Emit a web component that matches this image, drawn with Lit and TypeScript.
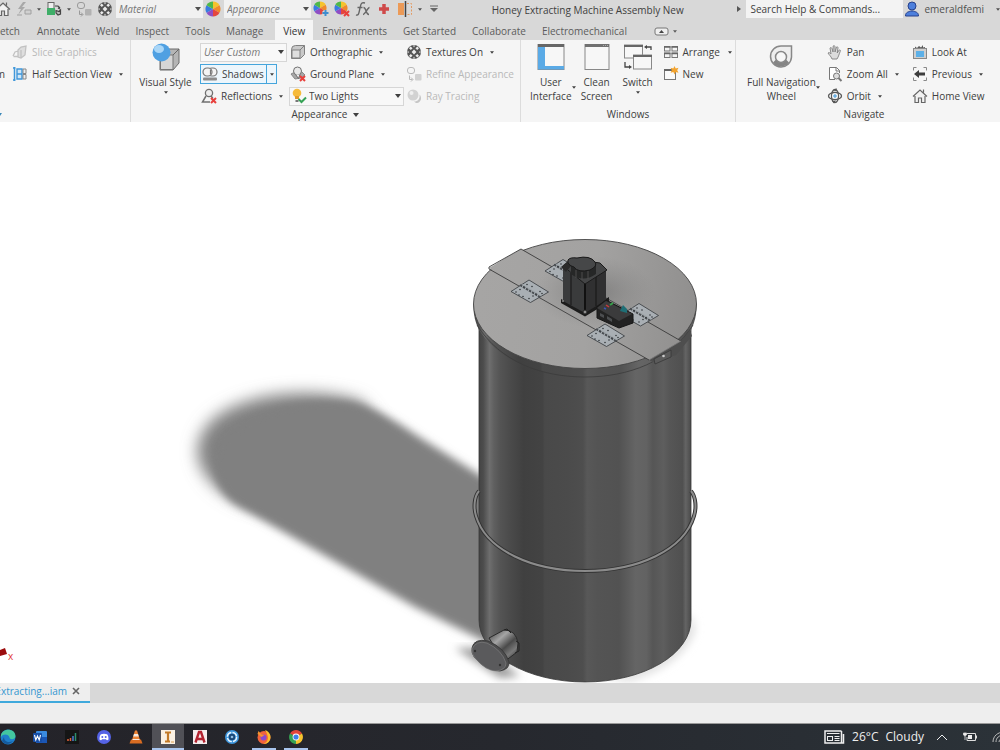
import { LitElement, html, svg, css, TemplateResult } from "lit";
import { customElement, property } from "lit/decorators.js";

const WHEEL = ["#f6c32c", "#f08a2a", "#e5473e", "#8e4fc4", "#3a7be0", "#4fb848"];

function wheel(cx: number, cy: number, r: number) {
  return WHEEL.map((fill, i) => {
    const a = ((i * 60 - 90) * Math.PI) / 180;
    const b = a + Math.PI / 3;
    const d = `M${cx} ${cy}L${cx + r * Math.cos(a)} ${cy + r * Math.sin(a)}A${r} ${r} 0 0 1 ${cx + r * Math.cos(b)} ${cy + r * Math.sin(b)}Z`;
    return svg`<path d=${d} fill=${fill}/>`;
  });
}

const redCross = svg`<path d="M10 10l5 5M15 10l-5 5" stroke="#e8403c" stroke-width="2"/>`;
const texture = svg`<circle cx="8" cy="8" r="7" fill="#555"/>
  <g fill="#ececec"><path d="M8 5.600l2.400 2.400L8 10.400 5.600 8z"/><path d="M4.600 2.600l2 1.600-1.800 1.800-1.800-1.800zM11.400 2.600l-2 1.600 1.800 1.800L13 4.200zM4.600 13.400l2-1.600L4.800 10 3 11.800zM11.400 13.400l-2-1.600L11.200 10l1.800 1.800zM1.600 7l1.600 1-1.600 1.200zM14.400 7l-1.600 1 1.600 1.200zM7 1.600h2L8 3.400zM7 14.400h2L8 12.600z"/></g>`;
const refine = svg`<g fill="none" stroke="currentColor"><rect x="1.500" y="1.500" width="7" height="6" rx="2.500"/><path d="M3.500 9.500v4h3M5 11.500l2 2-2 2"/></g><rect x="9" y="8" width="6.500" height="6.500" rx="1" fill="currentColor" opacity=".6"/>`;
const house = svg`<path d="M3 8v6.500h3.500V10h3v4.500H13V8L8 3.500z" fill="#f2f2f2"/><path d="M1 8.500L8 2l7 6.500M3 8v6.500h3.500V10h3v4.500H13V8M11.500 4.500v-3" fill="none" stroke="#666" stroke-width="1.200"/>`;

const ICONS: Record<string, unknown> = {
  house,
  texture,
  refine,
  bolt: svg`<path d="M7 1L2 8h3l-3 6 7-8H6l4-5z" fill="#a8a8a8"/><path d="M9 9h6v4H9zM1 14h5" fill="#d0d0d0" stroke="#a0a0a0"/>`,
  select: svg`<rect x="2" y="1.500" width="6" height="6" fill="#eee" stroke="#666"/><rect x="1" y="7" width="8" height="7" fill="#3fae68"/><path d="M9 5h3l2 2M14 8l-2-1M10 9.500l3 1 1.500-1.500v4L12 14l-2-2z" fill="#bbb" stroke="#444" stroke-width="1.200"/>`,
  wheel: wheel(8, 8, 7.5),
  wheelAdd: svg`${wheel(7, 7, 6.5)}<path d="M12.500 9v6M9.500 12h6" stroke="#d8d8d8" stroke-width="4"/><path d="M12.500 9v6M9.500 12h6" stroke="#3e8ed0" stroke-width="2"/>`,
  wheelRemove: svg`${wheel(7, 7, 6.5)}${redCross}`,
  fx: svg`<path d="M1 14c3 1 3-3 4-7s1-6 5-5M2.500 6.500h5M8.500 6.500c3 0 2 7 5.500 7M14.500 6.500c-2 0-4 7-6.500 7" fill="none" stroke="#666" stroke-width="1.400"/>`,
  plus: svg`<path d="M8 3v10M3 8h10" stroke="#cf4a4a" stroke-width="3.500"/>`,
  mirror: svg`<rect x="1" y="2" width="6" height="12" fill="#ec9a57"/><path d="M8.500 0v16" stroke="#444" stroke-width="1.500"/><path d="M10 2.500h4.500v11H10" fill="none" stroke="#e39a62" stroke-dasharray="2 1.500"/>`,
  slice: svg`<path d="M6 6l3-3 5-1-1 9-4 3-3-1z" fill="#dedede"/><path d="M1 12l2-4 3-1M1.500 12.500H6M6 6l3-3 5-1-1 9-4 3-3-1zM9 6v8" fill="none" stroke="#c2c2c2" stroke-width="1.300"/>`,
  section: svg`<path d="M1 2h2.500M1 14h2.500M2.500 1v14" stroke="#3f97da" stroke-width="1.500"/><path d="M5 3h5v10H5zM5 8h5" fill="#cfe6f7" stroke="#3f97da" stroke-width="1.400"/><path d="M11 3h3v4.500h-3zM11 8.500h3V13h-3z" fill="#eee" stroke="#888"/>`,
  shadows: svg`<g fill="#f4f4f4" stroke="#777" stroke-width="1.200"><rect x="6" y="2" width="9" height="8" rx="4"/><rect x="1" y="2" width="9" height="8" rx="4"/><path d="M8.500 3.500v5"/></g><rect x="1" y="11.500" width="14" height="3" rx="1" fill="#8c8c8c"/>`,
  reflections: svg`<circle cx="8" cy="5" r="3.600" fill="#eee" stroke="#707070" stroke-width="1.300"/><path d="M5 8l-3.500 6H9M10 8l2 2.500" fill="none" stroke="#707070" stroke-width="1.500"/>${redCross}`,
  ortho: svg`<path d="M1.500 5.500q0-4 4-4h9v9l-4 4h-9z" fill="#c9c9c9" stroke="#808080"/><rect x="2" y="6" width="8" height="8" fill="#dedede" stroke="#808080"/><path d="M10 6l4.500-4.500" stroke="#808080"/>`,
  ground: svg`<path d="M1 8l4-2h7l3 3-4 3-6 1z" fill="#a8a8a8" stroke="#888"/><circle cx="7.500" cy="5" r="4" fill="#e8e8e8" stroke="#707070"/><path d="M5.500 8.500l3 4 1.500-4" fill="#eee" stroke="#666"/>${redCross}`,
  bulb: svg`<circle cx="6" cy="5" r="4.300" fill="#f6bb3b"/><rect x="4" y="8" width="4" height="3" fill="#e39a2c"/><path d="M4.500 12h3v2h-3z" fill="#777"/><path d="M7.500 11l3 3L15 9.500" fill="none" stroke="#35a255" stroke-width="2"/>`,
  ray: svg`<circle cx="7" cy="7" r="5.500" fill="#d2d2d2"/><circle cx="5.500" cy="5" r="2" fill="#efefef"/><path d="M8 13.500c5 0 6-4 5.500-7 3 3 1.500 8.500-3.500 8.500z" fill="#c6c6c6"/>`,
  arrange: svg`<g fill="#f4f4f4" stroke="#777"><rect x="1.500" y="2.500" width="5.500" height="4.500"/><rect x="9" y="2.500" width="5.500" height="4.500"/><rect x="1.500" y="9" width="5.500" height="4.500"/><rect x="9" y="9" width="5.500" height="4.500"/></g><path d="M1 3h6.500M8.500 3H15M1 9.500h6.500M8.500 9.500H15" stroke="#666" stroke-width="1.500"/>`,
  newwin: svg`<rect x="1.500" y="3.500" width="11" height="10" fill="#fafafa" stroke="#777"/><path d="M1 4h8" stroke="#666" stroke-width="2"/><path d="M11.500 0l1.200 2.600 2.800-.8-1.300 2.500 1.300 2.400-2.800-.6-1.200 2.500-1.200-2.500-2.700.6 1.200-2.400-1.200-2.500 2.700.8z" fill="#f2a32e"/>`,
  pan: svg`<path d="M5 15c-1-3-3-4-4-6 1-1 2 0 3 1L3 4c1-1 2 0 2.200 1L6 8l.2-6c1-1 1.800 0 1.800 1v5l1.500-5c1-.6 1.600.2 1.500 1l-.8 5 2-3c1-.4 1.600.4 1 1.500-1 2-1.500 5-3.200 7.500z" fill="#dcdcdc" stroke="#808080" stroke-width=".9"/>`,
  zoom: svg`<path d="M12.500 7V4.500l-3-3h-7v12H8" fill="#fff" stroke="#777"/><path d="M9 1.500V5h3.500" fill="none" stroke="#777"/><circle cx="9.500" cy="10" r="3" fill="#ddd" stroke="#777"/><path d="M11.500 12l3 3" stroke="#777" stroke-width="2"/>`,
  orbit: svg`<g fill="none" stroke="#5a5a5a" stroke-width="1.300"><ellipse cx="8" cy="8" rx="6.500" ry="3.500"/><ellipse cx="8" cy="8" rx="3.500" ry="6.500"/></g><circle cx="8" cy="8" r="2.700" fill="#f6f6f6"/><path d="M8 6v4M6 8h4" stroke="#3f97da"/><path d="M5 13l4-.5-2 3zM6 2.500L9.500 0v3z" fill="#555"/>`,
  lookat: svg`<path d="M3 5V2.500l2 1.500L7 2l2 1.500L11 1v2.500L13 3v2z" fill="#5a5a5a"/><rect x="1.500" y="4.500" width="13" height="10" fill="#cfcfcf" stroke="#888"/><rect x="4" y="7" width="8" height="6" fill="#5cb0e8"/>`,
  previous: svg`<path d="M1.500 4.500v-3h3M11.500 1.500h3v3M14.500 11.500v3h-3M4.500 14.500h-3v-3" fill="none" stroke="#888"/><path d="M2 8l5-4v2.500h6v3H7V12z" fill="#3c3c3c"/>`,
  user: svg`<circle cx="8" cy="5" r="4" fill="#4d7fdc" stroke="#27418c"/><path d="M1.500 15c0-4 3-4 5-5h3c2 1 5 1 5 5z" fill="#4d7fdc" stroke="#27418c"/>`,
};

const BIG: Record<string, TemplateResult> = {
  visual: html`<svg class="big" width="32" height="28" viewBox="0 0 32 28" aria-hidden="true"><path d="M10 12l6-6h13v14l-6 7H10z" fill="#b5b5b5" stroke="#6b6b6b"/><path d="M10.500 12H23v14.500H10.500z" fill="#d6d6d6" stroke="#777"/><path d="M23 12l6-6" stroke="#666"/><circle cx="11.500" cy="9.500" r="9" fill="#4fa0e2"/><ellipse cx="9" cy="6" rx="5" ry="4" fill="#a9d6f7"/></svg>`,
  ui: html`<svg class="big" width="28" height="28" viewBox="0 0 28 28" aria-hidden="true"><rect x="1" y="1.500" width="26" height="25" fill="#f7f7f7" stroke="#888"/><path d="M1 2.500h26" stroke="#666" stroke-width="3"/><path d="M1 4h7v19h19v3.500H1z" fill="#5aaae6"/></svg>`,
  clean: html`<svg class="big" width="28" height="28" viewBox="0 0 28 28" aria-hidden="true"><rect x="2" y="1.500" width="24" height="25" fill="#f7f7f7" stroke="#888"/><path d="M2 2.500h24" stroke="#707070" stroke-width="3"/><path d="M20 2.500h5" stroke="#aaa" stroke-dasharray="1 1"/></svg>`,
  swap: html`<svg class="big" width="28" height="28" viewBox="0 0 28 28" aria-hidden="true"><rect x=".5" y="2" width="18" height="13" fill="#f7f7f7" stroke="#888"/><path d="M0 3h19" stroke="#666" stroke-width="2"/><rect x="9.500" y="12" width="18" height="14" fill="#f7f7f7" stroke="#888"/><path d="M9 13h19" stroke="#666" stroke-width="2"/><path d="M27 7V4h-5M1 19v5h5" fill="none" stroke="#444" stroke-width="1.300"/><path d="M23 2v4l-3-2zM5 22v4l3-2z" fill="#444"/></svg>`,
  nav: html`<svg class="big" width="28" height="28" viewBox="0 0 28 28" aria-hidden="true"><path d="M14 3h10.500v11a10.500 10.500 0 1 1-10.500-11z" fill="#eee" stroke="#888" stroke-width="1.500"/><path d="M6 19.500a10 10 0 0 0 16 0l-3-3h-10z" fill="#858585"/><circle cx="14" cy="14" r="5.500" fill="#f7f7f7" stroke="#888" stroke-width="1.500"/></svg>`,
};

const icon = (name: string) =>
  html`<svg class="icon" width="16" height="16" viewBox="0 0 16 16" aria-hidden="true">${ICONS[name]}</svg>`;

const arrow = (size = 4) =>
  html`<svg class="arrow" width=${size} height=${size === 4 ? 3 : 4} viewBox="0 0 6 4" aria-hidden="true"><path d="M0 0h6L3 4z" fill="currentColor"/></svg>`;

const tool = (name: string, label: string, menu = false, disabled = false) => html`
  <button class="tool" ?disabled=${disabled}>${icon(name)}<span>${label}</span>${menu ? arrow() : ""}</button>`;

const combo = (label: string, value: string, cls = "", pic = "") => html`
  <label class="combo ${cls}">${pic ? icon(pic) : ""}
    <select aria-label=${label}><option>${value}</option></select>${arrow(6)}
  </label>`;

const sharedStyles = css`
  * { box-sizing: border-box; }
  button, select, input { font: inherit; color: inherit; background: none; border: 0; padding: 0; margin: 0; border-radius: 0; }
  button { display: flex; align-items: center; white-space: nowrap; }
  svg { display: block; flex: none; }
  .combo { display: flex; align-items: center; height: 19px; padding: 0 2px 0 3px; border: 1px solid #d6d6d6; background: #f8f8f8; }
  .combo select { flex: 1; min-width: 0; appearance: none; outline: 0; }
  .combo.soft select { font-style: italic; color: #777; }
`;

@customElement("quick-bar")
class QuickBar extends LitElement {
  static styles = [sharedStyles, css`
    :host { display: flex; align-items: flex-start; height: 20px; background: #d8d8d8; color: #505050; overflow: hidden; }
    .quick { display: flex; align-items: center; height: 18px; flex: none; }
    .home { width: 11px; justify-content: flex-end; }
    .edit { display: flex; gap: 5px; margin: 0 0 0 5px; }
    .muted { color: #999; }
    .combo { height: 18px; border: 0; background: #f1f1f1; }
    .material { width: 87px; margin-left: 3px; }
    .look { width: 87px; margin-left: 3px; }
    .after { display: flex; align-items: center; gap: 5px; margin-left: 2px; }
    .after .edit { margin-left: 0; }
    .after .custom { margin-left: 3px; }
    .wheel { margin-left: 2px; }
    .title { flex: 1; margin: 0; font-size: 10px; line-height: 20px; font-weight: 400; color: #404040; text-align: center; white-space: nowrap; }
    .search { display: flex; align-items: center; gap: 5px; }
    .search input { width: 157px; height: 18px; padding: 0 4px; background: #f3f3f3; }
    .search input::placeholder { color: #404040; opacity: 1; }
    .account { gap: 4px; margin-left: 1px; height: 18px; }
    .account .arrow { margin-left: 8px; }
  `];
  render() {
    return html`
      <div class="quick">
        <button class="home" aria-label="Home">${icon("house")}</button>
        <button class="edit" aria-label="Update">${icon("bolt")}${arrow()}</button>
        <button class="edit" aria-label="Select">${icon("select")}${arrow()}</button>
        <button class="edit muted" aria-label="Adjust">${icon("refine")}</button>
        <button class="edit" aria-label="Texture">${icon("texture")}</button>
        ${combo("Material", "Material", "soft material")}
        <button class="wheel" aria-label="Appearance browser">${icon("wheel")}</button>
        ${combo("Appearance", "Appearance", "soft look")}
        <div class="after">
          <button aria-label="Add appearance">${icon("wheelAdd")}</button>
          <button aria-label="Clear appearance">${icon("wheelRemove")}</button>
          <button aria-label="Parameters">${icon("fx")}</button>
          <button aria-label="Insert">${icon("plus")}</button>
          <button class="edit" aria-label="Mirror">${icon("mirror")}${arrow()}</button>
          <button class="edit custom" aria-label="Customize">
            <svg width="8" height="8" viewBox="0 0 8 8"><path d="M0 1h8" stroke="#666"/><path d="M0 3h8L4 7z" fill="#666"/></svg>
          </button>
        </div>
      </div>
      <h1 class="title">Honey Extracting Machine Assembly New</h1>
      <div class="search">
        <svg width="4" height="6" viewBox="0 0 4 6"><path d="M0 0l4 3-4 3z" fill="#555"/></svg>
        <input aria-label="Search" placeholder="Search Help &amp; Commands..." />
      </div>
      <button class="account">${icon("user")}<span>emeraldfemi</span>${arrow()}</button>`;
  }
}

@customElement("ribbon-tabs")
class RibbonTabs extends LitElement {
  @property() active = "View";
  static styles = [sharedStyles, css`
    :host { display: flex; height: 20px; background: #d8d8d8; color: #5c5c5c; }
    .tab { height: 20px; padding: 2px 8px 0; }
    .first { width: 29px; padding-right: 9px; justify-content: flex-end; overflow: hidden; }
    .active { margin: 0 1px 0 4px; background: #f5f5f5; color: #333; }
    .toggle { gap: 4px; margin-left: 19px; padding-top: 2px; }
  `];
  render() {
    const tabs = ["Annotate", "Weld", "Inspect", "Tools", "Manage", "View", "Environments", "Get Started", "Collaborate", "Electromechanical"];
    return html`
      <button class="tab first">Sketch</button>
      ${tabs.map((t) => html`<button class="tab ${t === this.active ? "active" : ""}">${t}</button>`)}
      <button class="toggle" aria-label="Minimize ribbon">
        <svg width="15" height="9" viewBox="0 0 15 9"><rect x="1" y="1" width="13" height="7" rx="2" fill="#eee" stroke="#777"/><path d="M5 6h5L7.500 3z" fill="#444"/></svg>${arrow()}
      </button>`;
  }
}

@customElement("ribbon-panels")
class RibbonPanels extends LitElement {
  static styles = [sharedStyles, css`
    :host { display: flex; height: 82px; background: #f5f5f5; color: #404040; overflow: hidden; }
    .panel { display: flex; flex-direction: column; flex: none; border-right: 1px solid #dcdcdc; }
    .body { display: flex; height: 67px; padding-top: 1px; }
    .caption { display: flex; align-items: center; justify-content: center; gap: 6px; height: 15px; margin: 0; font-weight: 400; font-size: 10px; line-height: 15px; }
    .col { display: grid; grid-template-rows: repeat(3, 22px); align-items: center; align-content: start; }
    .tool { gap: 4px; height: 20px; }
    .tool .arrow { margin-left: 3px; }
    .tool:disabled { color: #b9b9b9; }
    .large { flex-direction: column; justify-content: flex-start; padding-top: 2px; line-height: 14px; }
    .large .arrow { margin-top: 2px; }
    .side { align-items: flex-start; padding-top: 2px; line-height: 14px; }
    .big { margin: 0 auto 4px; }
    .side .arrow { margin-top: 43px; }
    .views { width: 131px; }
    .views .body { gap: 7px; }
    .views .caption { justify-content: flex-start; color: #3b88b8; }
    .edge { width: 5px; overflow: hidden; justify-content: flex-end; height: 22px; margin-top: 22px; }
    .looks { width: 390px; }
    .looks .large { width: 69px; }
    .a { width: 87px; margin-right: 2px; }
    .b { width: 115px; margin-right: 2px; }
    .a .tool, .b .tool { padding-left: 1px; }
    .lights { padding-left: 1px; gap: 2px; }
    .split { display: flex; width: 77px; height: 20px; border: 1px solid #45a5dc; background: #edf6fc; }
    .split .tool { flex: 1; height: 18px; padding-left: 1px; }
    .split .drop { width: 10px; justify-content: center; border-left: 1px solid #45a5dc; }
    .windows { width: 215px; }
    .windows .body { padding-left: 9px; gap: 4px; }
    .windows .large { width: 34px; }
    .windows .large + .large { margin-left: 3px; }
    .windows .col { margin-left: 4px; }
    .windows .tool .arrow { margin-left: 4px; }
    .navigate { flex: 1 0 255px; border-right: 0; }
    .navigate .body { padding-left: 11px; gap: 7px; }
    .navigate .col + .col { margin-left: 6px; }
    .navigate .caption { padding-right: 8px; }
  `];
  render() {
    return html`
      <section class="panel views">
        <div class="body">
          <button class="edge">From</button>
          <div class="col">
            ${tool("slice", "Slice Graphics", false, true)}
            ${tool("section", "Half Section View", true)}
          </div>
        </div>
        <h2 class="caption"><svg width="2" height="3" viewBox="0 0 2 3"><path d="M0 0h2L0 3z" fill="currentColor"/></svg></h2>
      </section>

      <section class="panel looks">
        <div class="body">
          <button class="large">${BIG.visual}<span>Visual Style</span>${arrow()}</button>
          <div class="col a">
            ${combo("Lighting preset", "User Custom", "soft")}
            <div class="split">${tool("shadows", "Shadows")}<button class="drop" aria-label="Shadow options">${arrow()}</button></div>
            ${tool("reflections", "Reflections", true)}
          </div>
          <div class="col b">
            ${tool("ortho", "Orthographic", true)}
            ${tool("ground", "Ground Plane", true)}
            ${combo("Lighting style", "Two Lights", "lights", "bulb")}
          </div>
          <div class="col">
            ${tool("texture", "Textures On", true)}
            ${tool("refine", "Refine Appearance", false, true)}
            ${tool("ray", "Ray Tracing", false, true)}
          </div>
        </div>
        <h2 class="caption">Appearance ${arrow(6)}</h2>
      </section>

      <section class="panel windows">
        <div class="body">
          <button class="side"><span>${BIG.ui}User<br />Interface</span>${arrow()}</button>
          <button class="large">${BIG.clean}<span>Clean<br />Screen</span></button>
          <button class="large">${BIG.swap}<span>Switch</span>${arrow()}</button>
          <div class="col">
            ${tool("arrange", "Arrange", true)}
            ${tool("newwin", "New")}
          </div>
        </div>
        <h2 class="caption">Windows</h2>
      </section>

      <section class="panel navigate">
        <div class="body">
          <button class="side"><span>${BIG.nav}Full Navigation<br />Wheel</span>${arrow()}</button>
          <div class="col">
            ${tool("pan", "Pan")}
            ${tool("zoom", "Zoom All", true)}
            ${tool("orbit", "Orbit", true)}
          </div>
          <div class="col">
            ${tool("lookat", "Look At")}
            ${tool("previous", "Previous", true)}
            ${tool("house", "Home View")}
          </div>
        </div>
        <h2 class="caption">Navigate</h2>
      </section>`;
  }
}

const BODY_STOPS: [number, string][] = [
  [0, "#444"], [0.02, "#4c4c4c"], [0.05, "#6e6e6e"], [0.07, "#606060"], [0.1, "#545454"], [0.15, "#4a4a4a"], [0.21, "#404040"],
  [0.3, "#434343"], [0.31, "#494949"], [0.42, "#4b4b4b"], [0.49, "#4e4e4e"], [0.51, "#585858"], [0.56, "#545454"],
  [0.66, "#525252"], [0.74, "#656565"], [0.79, "#626262"], [0.82, "#565656"], [0.87, "#5e5e5e"], [0.9, "#565656"],
  [0.96, "#505050"], [0.975, "#646464"], [1, "#4a4a4a"],
];

const HOLES = [[5, 0.5], [9, -2], [13, -4.5], [8, 3.5], [25, 2.5], [29, 0], [18, 7], [22, 4.5], [31, 2], [16, -7], [21, -5], [12, 5]];

const hinge = (x: number, y: number) => svg`
  <g transform="translate(${x} ${y})">
    <path d="M0 0L18-11.500 37.500 .5 19.500 11z" fill="#a9afb4" stroke="#33373b" stroke-width=".8"/>
    <path d="M9-6.500L29 5.500" stroke="#4a4e52" stroke-width="2" stroke-dasharray="2.500 1"/>
    <path d="M10.500-7.500L30.500 4.500" stroke="#9aa0a5" stroke-width=".7"/>
    ${HOLES.map(([hx, hy]) => svg`<circle cx=${hx} cy=${hy} r=".8" fill="#34383c"/>`)}
  </g>`;

const RING = "M479 491C474 497 473.500 508 476 516C486 550 532 571 585 571S684 550 694 516C696.500 508 696 497 691 491";

@customElement("model-view")
class ModelView extends LitElement {
  static styles = css`
    :host { display: flex; background: #fff; overflow: hidden; }
    .scene { display: block; width: 100%; height: 100%; }
    .axis { font: 10px "Open Sans", sans-serif; fill: #e23a3a; }
  `;
  render() {
    return html`<svg class="scene" viewBox="0 122 1000 561" preserveAspectRatio="xMidYMid meet" role="img" aria-label="Honey extracting machine assembly">
      <defs>
        <linearGradient id="steel">${BODY_STOPS.map(([o, c]) => svg`<stop offset=${o} stop-color=${c}/>`)}</linearGradient>
        <linearGradient id="lid" gradientUnits="userSpaceOnUse" x1="480" y1="290" x2="700" y2="320"><stop offset="0" stop-color="#a6a5a4"/><stop offset=".5" stop-color="#a3a2a1"/><stop offset="1" stop-color="#8f8e8d"/></linearGradient>
        <linearGradient id="pipe" x1="0" y1="0" x2=".8" y2="1"><stop offset="0" stop-color="#3a3a3a"/><stop offset=".35" stop-color="#a5a5a5"/><stop offset=".6" stop-color="#4a4a4a"/><stop offset=".8" stop-color="#7a7a7a"/><stop offset="1" stop-color="#333"/></linearGradient>
        <radialGradient id="dim"><stop offset="0" stop-color="#555" stop-opacity=".45"/><stop offset="1" stop-color="#777" stop-opacity="0"/></radialGradient>
        <filter id="far" x="-20%" y="-20%" width="140%" height="140%"><feGaussianBlur stdDeviation="8"/></filter>
        <filter id="near" x="-20%" y="-20%" width="140%" height="140%"><feGaussianBlur stdDeviation="4"/></filter>
      </defs>

      <path d="M246 504C204 488 181 452 211 421C242 391 318 386 362 402L390 440 300 520Z" fill="#808080" filter="url(#far)"/>
      <path d="M238 506C214 492 204 456 230 432C256 406 320 395 362 405C384 412 402 426 424 440L510 494V654L478 638L415 607Z" fill="#808080" filter="url(#near)"/>
      <path d="M455 648L480 648 520 676 500 678Z" fill="#999" filter="url(#near)"/>
      <path d="M600 678Q680 666 692 612L695 630Q684 664 630 681Z" fill="#ddd" filter="url(#near)"/>

      <path d="M479 320V620A106 62 0 0 0 691 620V320Z" fill="url(#steel)" stroke="#383838" stroke-width=".8"/>
      <path d=${RING} fill="none" stroke="#333" stroke-width="4"/>
      <path d=${RING} fill="none" stroke="#8b8b8b" stroke-width="2"/>

      <path d="M473.500 304Q473 318 479 330C500 362 542 377 585 377S670 362 691 330Q697 318 696.500 304Z" fill="url(#steel)"/>
      <path d="M477 325C500 362 542 377 585 377S670 362 693 325" fill="none" stroke="#3b3b3b" stroke-width=".8"/>
      <ellipse cx="585" cy="304" rx="111.500" ry="64.500" fill="url(#lid)" stroke="#444" stroke-width=".9"/>
      <path d="M489 268L521 249 681 341 649 360Z" fill="url(#lid)"/>
      <path d="M649 360L489 269V267L521 249 681 341" fill="none" stroke="#3a3a3a" stroke-width=".9"/>
      <path d="M649 360L681 341 690 330 692 336 676 355 655 363Z" fill="#4e4e4e"/>
      <path d="M649 360L681 341" stroke="#7f7f7f" stroke-width=".8"/>
      <path d="M654 359L671 350V357L655 364Z" fill="#5b5b5b" stroke="#333" stroke-width=".7"/>
      <circle cx="663.500" cy="356" r="1.300" fill="#ccc"/>
      <ellipse cx="595" cy="292" rx="60" ry="36" fill="url(#dim)"/>

      ${hinge(545, 271)}${hinge(511, 291.5)}${hinge(621, 315)}${hinge(587, 335.5)}

      <path d="M561 299L585 311 609 297V302L585 316.500 561 303Z" fill="#1c1c1c"/>
      <path d="M563 267L585 282V313L563 301Z" fill="#3a3b3c"/>
      <path d="M585 282L606 270V300L585 313Z" fill="#303031"/>
      <path d="M571 273V305M596 276V306" stroke="#151515"/>
      <path d="M585 282V313" stroke="#111" stroke-width="2"/>
      <path d="M563 266L572 259 600 263 607 270 585 284Z" fill="#444546" stroke="#1b1b1b"/>
      <path d="M571 263V274Q583 283 596 274V263Z" fill="#262727"/>
      <path d="M576 270v8M582 272v8M588 271v8" stroke="#4c4c4c"/>
      <path d="M561 267l7-6 3 5-5 6z" fill="#2a2a2a"/>
      <path d="M568 260Q570 257 577 258 590 255 595 262 598 266 590 270 578 273 574 267 567 265 568 260Z" fill="#464748" stroke="#1a1a1a"/>
      <circle cx="585" cy="312" r="2" fill="#8d8d8d" stroke="#222"/><circle cx="563" cy="301" r="1" fill="#888"/>

      <path d="M597 307L606 300 633 314V323L619 328 597 318Z" fill="#222" stroke="#161616"/>
      <path d="M597 308L606 301 632 314 619 321Z" fill="#3b3b3c"/>
      <path d="M600 313l4 2v3l-4-2zM607 316l5 3v3l-5-3z" fill="#4c4e50"/>
      <path d="M606 305l3 2" stroke="#cc3b3b" stroke-width="1.500"/><path d="M610 305l3-2" stroke="#36a04a" stroke-width="2"/>
      <path d="M604 308l2 1" stroke="#3c55b8" stroke-width="1.500"/><path d="M623 305l4 4v4l-7-2z" fill="#1f6f76"/>

      <path d="M489 638L504 630Q516 630 518 643L517 652 504 662Z" fill="url(#pipe)" stroke="#2b2b2b"/>
      <path d="M504 630l3-1 4 4M516 641l3 2v8l-4 2" fill="none" stroke="#222"/>
      <path d="M472 648Q474 638 488 641 505 648 509 662 510 669 500 671 486 671 475 658 471 653 472 648Z" fill="#4d4d4e" stroke="#333" stroke-width=".8"/>
      <path d="M472 649Q476 640 487 643 502 650 506 663 506 670 496 671 486 671 475 658 471 653 472 649Z" fill="#5a5a5c" stroke="#858585" stroke-width=".6"/>
      <circle cx="475" cy="651" r="1.200" fill="#333"/><circle cx="500" cy="665" r="1.200" fill="#333"/>

      <path d="M0 650l5-2 2 6-7 2z" fill="#9c0c0c"/>
      <text class="axis" x="8" y="660">x</text>
    </svg>`;
  }
}

const APPS: [string, TemplateResult][] = [
  ["Edge", svg`<circle cx="8" cy="8" r="7.500" fill="#1f7fcb"/><path d="M1 6C3-1 15-1 15.500 7c0 4-6 4-6 1.500C9 5 3 4 1 8z" fill="#43c7a0"/><path d="M4 8c0 5 5 6 9 4-3 4-9 4-11 0z" fill="#155a9c"/>`],
  ["Word", svg`<rect x="4" y="2" width="11" height="12" rx="1" fill="#3a8be0"/><rect x="4" y="8" width="11" height="6" fill="#1b56b5"/><rect x="1" y="4" width="9" height="9" rx="1" fill="#174ea6"/><path d="M2.500 6l1.300 5 1.700-4 1.700 4 1.300-5" fill="none" stroke="#fff" stroke-width="1.100"/>`],
  ["Monitor", svg`<rect x="1" y="1" width="14" height="14" fill="#151515"/><path d="M4 12v-2M6.500 12V9" stroke="#e0603a" stroke-width="1.500"/><path d="M9 12V7" stroke="#4f7bd0" stroke-width="1.500"/><path d="M11.500 12V4" stroke="#2d8f6c" stroke-width="1.500"/>`],
  ["Discord", svg`<circle cx="8" cy="8" r="7" fill="#5563e6"/><path d="M3.500 10.500C3.500 8 4 6 5 5.300c2-.8 4-.8 6 0 1 .7 1.500 2.700 1.500 5.200-1.500 1.200-2 .5-2.500-.3H6c-.5.8-1 1.500-2.500.3z" fill="#fff"/><circle cx="6.300" cy="8" r="1" fill="#5563e6"/><circle cx="9.700" cy="8" r="1" fill="#5563e6"/>`],
  ["VLC", svg`<path d="M7 1.500h2l3 9.500H4z" fill="#ee8434"/><path d="M6 5h4l.8 2.500H5.200z" fill="#f5e9df"/><path d="M3 10.500h10l1.500 4h-13z" fill="#d96c22"/><path d="M4.500 10.500h7" stroke="#f5e9df"/>`],
  ["Inventor", svg`<rect x="1" y="1" width="14" height="14" fill="#faf0e2"/><path d="M5 3.500h6M8 3.500v9M5 12.500h5" stroke="#c27a28" stroke-width="2.200"/><path d="M11 13h3" stroke="#d89a4c"/>`],
  ["AutoCAD", svg`<rect x="1" y="1" width="14" height="14" fill="#f6eded"/><path d="M3.500 13.500L7 3h2l3.500 10.500M5 10h6" fill="none" stroke="#b32330" stroke-width="2.400"/>`],
  ["Viewer", svg`<circle cx="8" cy="8" r="7" fill="#3d95dc"/><circle cx="8" cy="8" r="4.600" fill="none" stroke="#e8f4fd" stroke-width="1.500" stroke-dasharray="6 1.200"/><circle cx="8" cy="8" r="3.200" fill="#1a4777"/><circle cx="8" cy="8" r="1.300" fill="#8fbde0"/>`],
  ["Firefox", svg`<circle cx="8" cy="8.500" r="6.500" fill="#f2643c"/><path d="M9 1c5 2 6.500 6 5 10-1.500 3-4.500 4-6.500 4 5-2 6-7 1.500-14z" fill="#fbc02d"/><circle cx="7.500" cy="8.500" r="3" fill="#8a4bd0"/><path d="M1.500 5l1-3 3 3.500 3 .5-3 2z" fill="#f8922e"/>`],
  ["Chrome", svg`<path d="M8 8L2 4.500A7 7 0 0 1 14 4.500Z" fill="#e2453a"/><path d="M8 8L14 4.500A7 7 0 0 1 8 15Z" fill="#f6c32e"/><path d="M8 8v7A7 7 0 0 1 2 4.500Z" fill="#36a353"/><circle cx="8" cy="8" r="3.400" fill="#fff"/><circle cx="8" cy="8" r="2.600" fill="#3f7fe8"/>`],
];

@customElement("task-bar")
class TaskBar extends LitElement {
  static styles = [sharedStyles, css`
    :host { display: flex; justify-content: space-between; height: 26px; background: linear-gradient(90deg, #242329, #26282e 50%, #2b3238); color: #eee; overflow: hidden; }
    .apps { display: flex; margin-left: -8px; }
    .app { width: 32px; height: 26px; justify-content: center; }
    .running { background: linear-gradient(#a9c5ee, #a9c5ee) center bottom / 24px 2px no-repeat; }
    .current { background: linear-gradient(#a9c5ee, #a9c5ee) center bottom / 100% 2px no-repeat #515157; }
    .tray { display: flex; align-items: center; }
    .weather { gap: 7px; font-size: 12px; line-height: 26px; }
    .up { margin: 0 15px 0 12px; }
    .wifi { width: 8px; margin-left: 15px; overflow: hidden; justify-content: flex-start; }
  `];
  render() {
    return html`
      <nav class="apps">
        ${APPS.map(([name, art]) => html`<button class="app ${name === "Inventor" ? "current" : name === "Firefox" || name === "Chrome" ? "running" : ""}" aria-label=${name}>
          <svg width="16" height="16" viewBox="0 0 16 16">${art}</svg></button>`)}
      </nav>
      <div class="tray">
        <button class="weather">
          <svg width="21" height="14" viewBox="0 0 21 14"><path d="M17.500 1H1v12h18.500V4M17.500 1v12" fill="none" stroke="#eee" stroke-width="1.500"/><path d="M3 3.500h12.500M10.500 6.500h5M10.500 8.500h5M10.500 10.500h5" stroke="#eee"/><rect x="3.500" y="6.500" width="5" height="4" fill="none" stroke="#eee"/></svg>
          <span>26°C</span><span>Cloudy</span>
        </button>
        <button class="up" aria-label="Show hidden icons"><svg width="12" height="7" viewBox="0 0 12 7"><path d="M1 6l5-5 5 5" fill="none" stroke="#eee"/></svg></button>
        <button aria-label="Battery"><svg width="14" height="10" viewBox="0 0 14 10"><path d="M4 1.500h8.500v7H4V5M13.500 3.500v3" fill="none" stroke="#ddd"/><rect x="5" y="3" width="4" height="4" fill="#eee"/><path d="M.5 1h3v2L2 4 .5 3zM2 4v4" fill="#eee" stroke="#ddd" stroke-width=".8"/></svg></button>
        <button class="wifi" aria-label="Network"><svg width="14" height="12" viewBox="0 0 14 12"><path d="M1 11C1 5 6 1 12 1M4 11c0-4 3-7 8-7M7 11c0-2 2-4 5-4" fill="none" stroke="#bbb"/></svg></button>
      </div>`;
  }
}

@customElement("app-root")
class AppRoot extends LitElement {
  static styles = [sharedStyles, css`
    :host { display: flex; flex-direction: column; min-height: 100vh; font: 10px/14px "Open Sans", "Noto Sans", sans-serif; background: #eee; overflow: hidden; }
    .view { flex: 1; min-height: 0; }
    .docs { display: flex; height: 20px; background: #d8d8d8; }
    .doc { display: flex; align-items: center; gap: 5px; width: 90px; padding: 0 10px 2px 0; background: #eee; border-bottom: 2px solid #3fa9dc; color: #3596d0; }
    .name { display: flex; flex: 1; min-width: 0; justify-content: flex-end; overflow: hidden; color: inherit; text-decoration: none; white-space: nowrap; }
    .status { height: 21px; background: #eee; border-bottom: 1px solid #999; }
  `];
  render() {
    return html`
      <quick-bar></quick-bar>
      <ribbon-tabs></ribbon-tabs>
      <ribbon-panels></ribbon-panels>
      <model-view class="view"></model-view>
      <div class="docs">
        <div class="doc">
          <a class="name" href="#">Honey Extracting...iam</a>
          <button aria-label="Close document"><svg width="8" height="8" viewBox="0 0 8 8"><path d="M1 1l6 6M7 1L1 7" stroke="#666" stroke-width="1.600"/></svg></button>
        </div>
      </div>
      <footer class="status"></footer>
      <task-bar></task-bar>`;
  }
}
